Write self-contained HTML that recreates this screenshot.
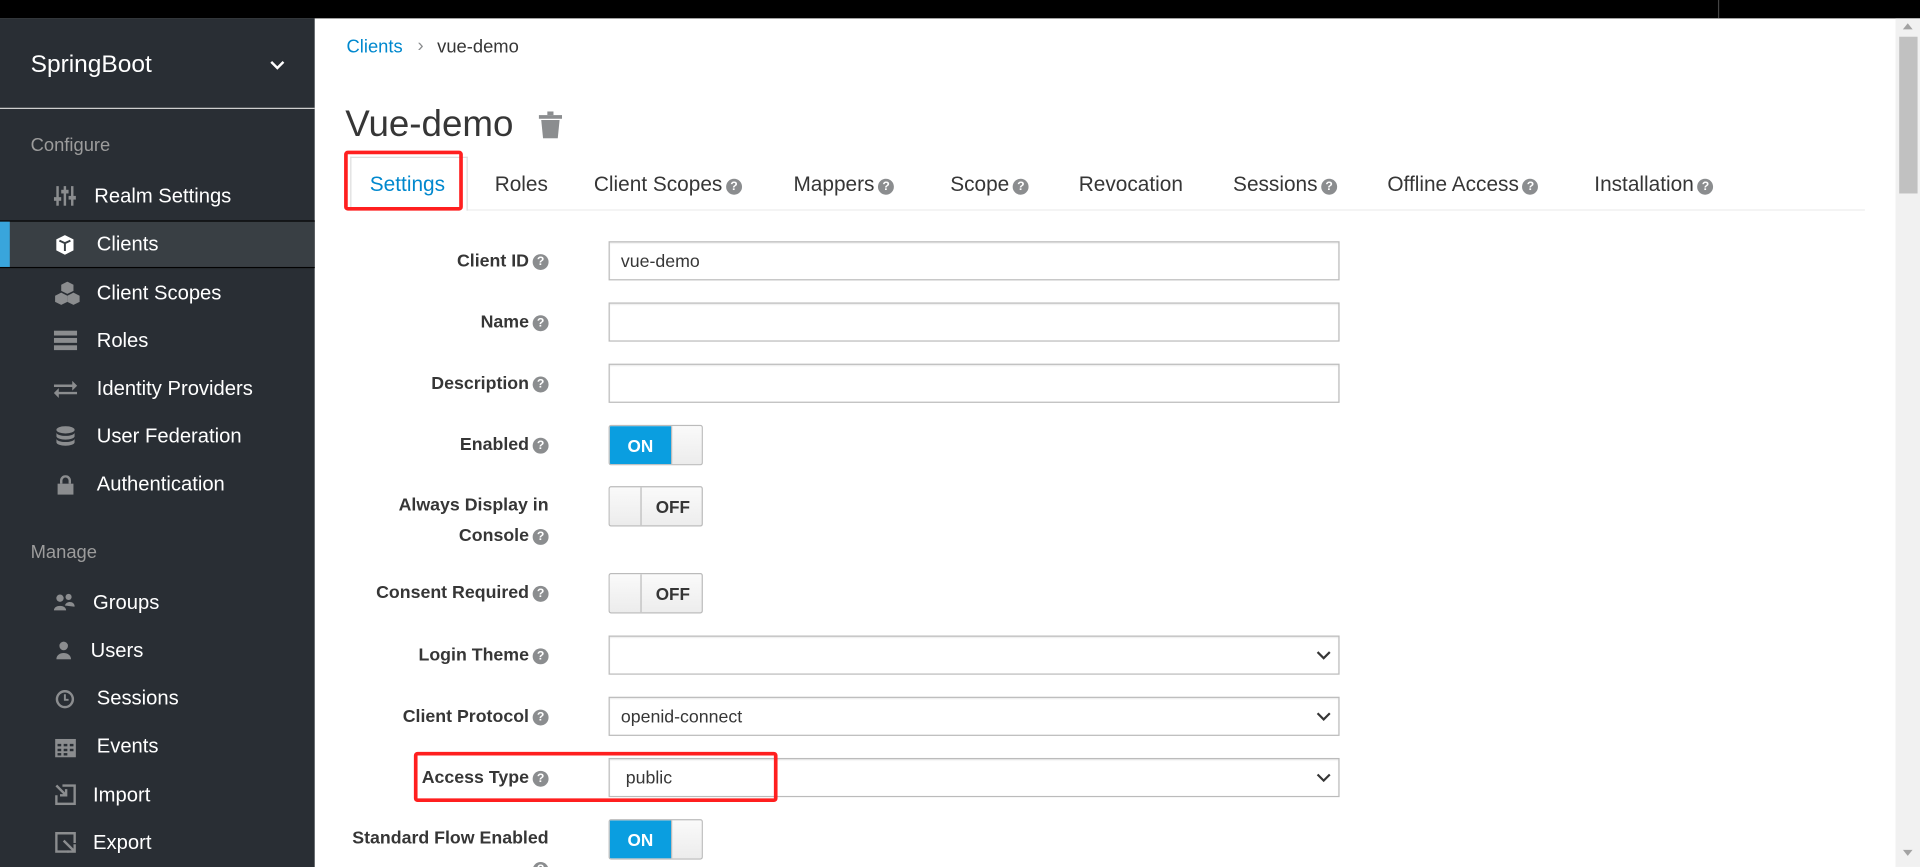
<!DOCTYPE html>
<html><head><meta charset="utf-8"><style>
html,body{margin:0;padding:0;width:1920px;height:866px;overflow:hidden;background:#fff;font-family:"Liberation Sans",sans-serif}
#w{position:absolute;left:0;top:0;width:1568px;height:708px;transform:scale(1.22449);transform-origin:0 0;overflow:hidden;background:#fff}
.a{position:absolute;white-space:nowrap}
#top{left:0;top:0;width:1568px;height:15px;background:#000}
#side{left:0;top:15px;width:257px;height:700px;background:#292e34}
.si{position:absolute;left:79px;font-size:16.5px;color:#fff;transform:translateY(calc(-50% + 1px))}
.ic{position:absolute;left:44px;transform:translateY(-50%)}
.hd{position:absolute;left:25px;font-size:15px;color:#9c9c9c;transform:translateY(calc(-50% + 1px))}
.tab{position:absolute;top:150px;transform:translateY(calc(-50% + 1px));font-size:17px;color:#363636}
.q{display:inline-block;width:13px;height:13px;border-radius:50%;background:#8b8d8f;color:#fff;font-size:10px;font-weight:bold;text-align:center;line-height:13px;vertical-align:1px;margin-left:3px}
.lb{position:absolute;right:1120px;font-size:14.5px;font-weight:bold;color:#363636;text-align:right;transform:translateY(calc(-50% + 1px));line-height:25px}
.in{position:absolute;left:497px;width:595px;height:30px;border:1px solid #bbb;background:#fff;box-shadow:inset 0 1px 1px rgba(0,0,0,.08);font-size:14.5px;color:#363636;line-height:32px;box-sizing:content-box}
.in span{padding-left:9px}
.chev{position:absolute;right:6px;top:10px}
.tg{position:absolute;left:497px;width:75px;height:31px;border:1px solid #bbb;border-radius:2px;overflow:hidden;background:linear-gradient(#fafafa,#ededed)}
.on{position:absolute;left:0;top:0;width:50px;height:31px;background:#0a9ee0;color:#fff;font-weight:bold;font-size:14px;text-align:center;line-height:32px}
.knob{position:absolute;top:0;height:31px;width:26px;background:linear-gradient(#fafafa,#ececec);border-left:1px solid #bbb}
.off{position:absolute;left:28px;top:0;width:47px;height:31px;color:#363636;font-weight:bold;font-size:14px;text-align:center;line-height:32px}
</style></head><body><div id="w">
<div class="a" id="top"></div>
<div class="a" style="left:1403px;top:0;width:1px;height:15px;background:#444"></div>
<div class="a" id="side"></div>
<div class="a" style="left:25px;top:42px;font-size:20px;color:#fff">SpringBoot</div>
<svg class="a" style="left:220px;top:48px" width="13" height="10" viewBox="0 0 13 10"><path d="M1.5 2.5l5 5 5-5" stroke="#fff" stroke-width="2" fill="none"/></svg>
<div class="a" style="left:0;top:88px;width:257px;height:1px;background:#d1d1d1"></div>
<div class="hd" style="top:118px">Configure</div>
<div class="a" style="left:0;top:180px;width:257px;height:39px;background:#393f44;border-top:1px solid #030303;border-bottom:1px solid #030303;box-sizing:border-box"></div>
<div class="a" style="left:0;top:181px;width:8px;height:37px;background:#39a5dc"></div>
<svg class="ic" style="top:160px" width="18" height="18" viewBox="0 0 18 18" fill="#8b8d8f"><rect x="2" y="1" width="2" height="16"/><rect x="8" y="1" width="2" height="16"/><rect x="14" y="1" width="2" height="16"/><rect x="0" y="10" width="6" height="3"/><rect x="6" y="4" width="6" height="3"/><rect x="12" y="9" width="6" height="3"/></svg>
<div class="si" style="top:160px;left:77px">Realm Settings</div>
<svg class="ic" style="top:200px" width="18" height="18" viewBox="0 0 18 18"><path d="M9 1l7 3.5v9L9 17l-7-3.5v-9z" fill="#fff"/><path d="M4.5 5.5L9 7.6l4.5-2.1M9 7.6V14" stroke="#393f44" stroke-width="1.6" fill="none"/></svg>
<div class="si" style="top:199px">Clients</div>
<svg class="ic" style="top:240px" width="22" height="20" viewBox="0 0 22 20" fill="#8b8d8f"><path d="M11 0l5 2.5v5L11 10 6 7.5v-5z"/><path d="M6 9l5 2.5v5L6 19 1 16.5v-5z"/><path d="M16 9l5 2.5v5L16 19l-5-2.5v-5z"/></svg>
<div class="si" style="top:239px">Client Scopes</div>
<svg class="ic" style="top:278px" width="19" height="16" viewBox="0 0 19 16" fill="#8b8d8f"><rect y="0" width="19" height="4"/><rect y="6" width="19" height="4"/><rect y="12" width="19" height="4"/></svg>
<div class="si" style="top:278px">Roles</div>
<svg class="ic" style="top:318px" width="19" height="14" viewBox="0 0 19 14" fill="#8b8d8f"><path d="M0 3h15V0l4 4-4 4V5H0zM19 9H4V6L0 10l4 4v-3h15z"/></svg>
<div class="si" style="top:317px">Identity Providers</div>
<svg class="ic" style="top:357px;left:46px" width="15" height="18" viewBox="0 0 15 18" fill="#8b8d8f"><ellipse cx="7.5" cy="3" rx="7.5" ry="3"/><path d="M0 5c0 4 15 4 15 0v3c0 4-15 4-15 0zM0 10c0 4 15 4 15 0v3c0 4-15 4-15 0z"/></svg>
<div class="si" style="top:356px">User Federation</div>
<svg class="ic" style="top:396px;left:47px" width="13" height="16" viewBox="0 0 13 16" fill="#8b8d8f"><rect y="7" width="13" height="9"/><path d="M3 7V4.5a3.5 3.5 0 017 0V7" stroke="#8b8d8f" stroke-width="2" fill="none"/></svg>
<div class="si" style="top:395px">Authentication</div>
<div class="hd" style="top:450px">Manage</div>
<svg class="ic" style="top:492px" width="17" height="15" viewBox="0 0 17 15" fill="#8b8d8f"><circle cx="5" cy="4" r="3"/><path d="M0 14c0-5 10-5 10 0z"/><circle cx="12" cy="3" r="2.5"/><path d="M9 10c1-4 8-4 8 1z"/></svg>
<div class="si" style="top:492px;left:76px">Groups</div>
<svg class="ic" style="top:531px;left:46px" width="12" height="15" viewBox="0 0 12 15" fill="#8b8d8f"><circle cx="6" cy="4" r="3.5"/><path d="M0 15c0-7 12-7 12 0z"/></svg>
<div class="si" style="top:531px;left:74px">Users</div>
<svg class="ic" style="top:571px;left:45px" width="16" height="16" viewBox="0 0 16 16"><circle cx="8" cy="8" r="6.5" stroke="#8b8d8f" stroke-width="2" fill="none"/><path d="M8 4v4.5h3" stroke="#8b8d8f" stroke-width="1.6" fill="none"/></svg>
<div class="si" style="top:570px">Sessions</div>
<svg class="ic" style="top:610px;left:45px" width="17" height="17" viewBox="0 0 17 17" fill="#8b8d8f"><rect y="2" width="17" height="15"/><g fill="#292e34"><rect x="2" y="6" width="3" height="2"/><rect x="7" y="6" width="3" height="2"/><rect x="12" y="6" width="3" height="2"/><rect x="2" y="10" width="3" height="2"/><rect x="7" y="10" width="3" height="2"/><rect x="12" y="10" width="3" height="2"/><rect x="2" y="13.5" width="3" height="2"/><rect x="7" y="13.5" width="3" height="2"/></g></svg>
<div class="si" style="top:609px">Events</div>
<svg class="ic" style="top:649px;left:45px" width="17" height="17" viewBox="0 0 17 17"><path d="M6 1h10v15H1V9" stroke="#8b8d8f" stroke-width="2" fill="none"/><path d="M1 1l8 8M4 9h5V4" stroke="#8b8d8f" stroke-width="2" fill="none"/></svg>
<div class="si" style="top:649px;left:76px">Import</div>
<svg class="ic" style="top:688px;left:45px" width="17" height="17" viewBox="0 0 17 17"><path d="M11 16H1V1h15v8" stroke="#8b8d8f" stroke-width="2" fill="none"/><path d="M7 7l9 9M10 16h6v-6" stroke="#8b8d8f" stroke-width="2" fill="none"/></svg>
<div class="si" style="top:688px;left:76px">Export</div>

<div class="a" style="left:283px;top:30px;font-size:15px;color:#0088ce">Clients</div>
<div class="a" style="left:341px;top:29px;font-size:15px;color:#8b8d8f">›</div>
<div class="a" style="left:357px;top:30px;font-size:15px;color:#363636">vue-demo</div>
<div class="a" style="left:282px;top:85px;font-size:30px;color:#363636;font-weight:300">Vue-demo</div>
<svg class="a" style="left:440px;top:91px" width="19" height="22" viewBox="0 0 19 22" fill="#8b8d8f"><rect x="0" y="3" width="19" height="3"/><rect x="7" y="0" width="5" height="3"/><path d="M2 7h15l-1.5 15h-12z"/></svg>

<div class="a" style="left:283px;top:171px;width:1240px;height:1px;background:#ededed"></div>
<div class="a" style="left:286px;top:128px;width:96px;height:44px;background:#fff;border:1px solid #ddd;border-bottom:none;box-sizing:border-box"></div>
<div class="a" style="left:281px;top:123px;width:97px;height:49px;border:3px solid #ff1f1f;border-radius:3px;box-sizing:border-box"></div>
<div class="tab" style="left:302px;color:#0088ce">Settings</div>
<div class="tab" style="left:404px">Roles</div>
<div class="tab" style="left:485px">Client Scopes<span class="q">?</span></div>
<div class="tab" style="left:648px">Mappers<span class="q">?</span></div>
<div class="tab" style="left:776px">Scope<span class="q">?</span></div>
<div class="tab" style="left:881px">Revocation</div>
<div class="tab" style="left:1007px">Sessions<span class="q">?</span></div>
<div class="tab" style="left:1133px">Offline Access<span class="q">?</span></div>
<div class="tab" style="left:1302px">Installation<span class="q">?</span></div>

<div class="lb" style="top:213px">Client ID<span class="q">?</span></div>
<div class="in" style="top:197px"><span>vue-demo</span></div>
<div class="lb" style="top:263px">Name<span class="q">?</span></div>
<div class="in" style="top:247px"></div>
<div class="lb" style="top:313px">Description<span class="q">?</span></div>
<div class="in" style="top:297px"></div>
<div class="lb" style="top:363px">Enabled<span class="q">?</span></div>
<div class="tg" style="top:347px"><div class="on">ON</div><div class="knob" style="left:50px"></div></div>
<div class="lb" style="top:425px">Always Display in<br>Console<span class="q">?</span></div>
<div class="tg" style="top:397px"><div class="knob" style="left:-1px;border-left:none;border-right:1px solid #bbb"></div><div class="off">OFF</div></div>
<div class="lb" style="top:484px">Consent Required<span class="q">?</span></div>
<div class="tg" style="top:468px"><div class="knob" style="left:-1px;border-left:none;border-right:1px solid #bbb"></div><div class="off">OFF</div></div>
<div class="lb" style="top:535px">Login Theme<span class="q">?</span></div>
<div class="in" style="top:519px"><svg class="chev" width="12" height="10" viewBox="0 0 12 10"><path d="M1 2.5l5 5 5-5" stroke="#363636" stroke-width="1.8" fill="none"/></svg></div>
<div class="lb" style="top:585px">Client Protocol<span class="q">?</span></div>
<div class="in" style="top:569px"><span>openid-connect</span><svg class="chev" width="12" height="10" viewBox="0 0 12 10"><path d="M1 2.5l5 5 5-5" stroke="#363636" stroke-width="1.8" fill="none"/></svg></div>
<div class="lb" style="top:635px">Access Type<span class="q">?</span></div>
<div class="in" style="top:619px"><span style="padding-left:13px">public</span><svg class="chev" width="12" height="10" viewBox="0 0 12 10"><path d="M1 2.5l5 5 5-5" stroke="#363636" stroke-width="1.8" fill="none"/></svg></div>
<div class="a" style="left:338px;top:614px;width:297px;height:41px;border:3px solid #ff1f1f;border-radius:3px;box-sizing:border-box"></div>
<div class="lb" style="top:697px">Standard Flow Enabled<br><span class="q">?</span></div>
<div class="tg" style="top:669px"><div class="on">ON</div><div class="knob" style="left:50px"></div></div>

<div class="a" style="left:1548px;top:15px;width:20px;height:693px;background:#f1f1f1"></div>
<div class="a" style="left:1551px;top:30px;width:15px;height:128px;background:#c1c1c1"></div>
<svg class="a" style="left:1553px;top:19px" width="10" height="6"><path d="M5 0l4 5H1z" fill="#a3a3a3"/></svg>
<svg class="a" style="left:1553px;top:694px" width="10" height="6"><path d="M5 5l4-5H1z" fill="#a3a3a3"/></svg>
</div></body></html>
